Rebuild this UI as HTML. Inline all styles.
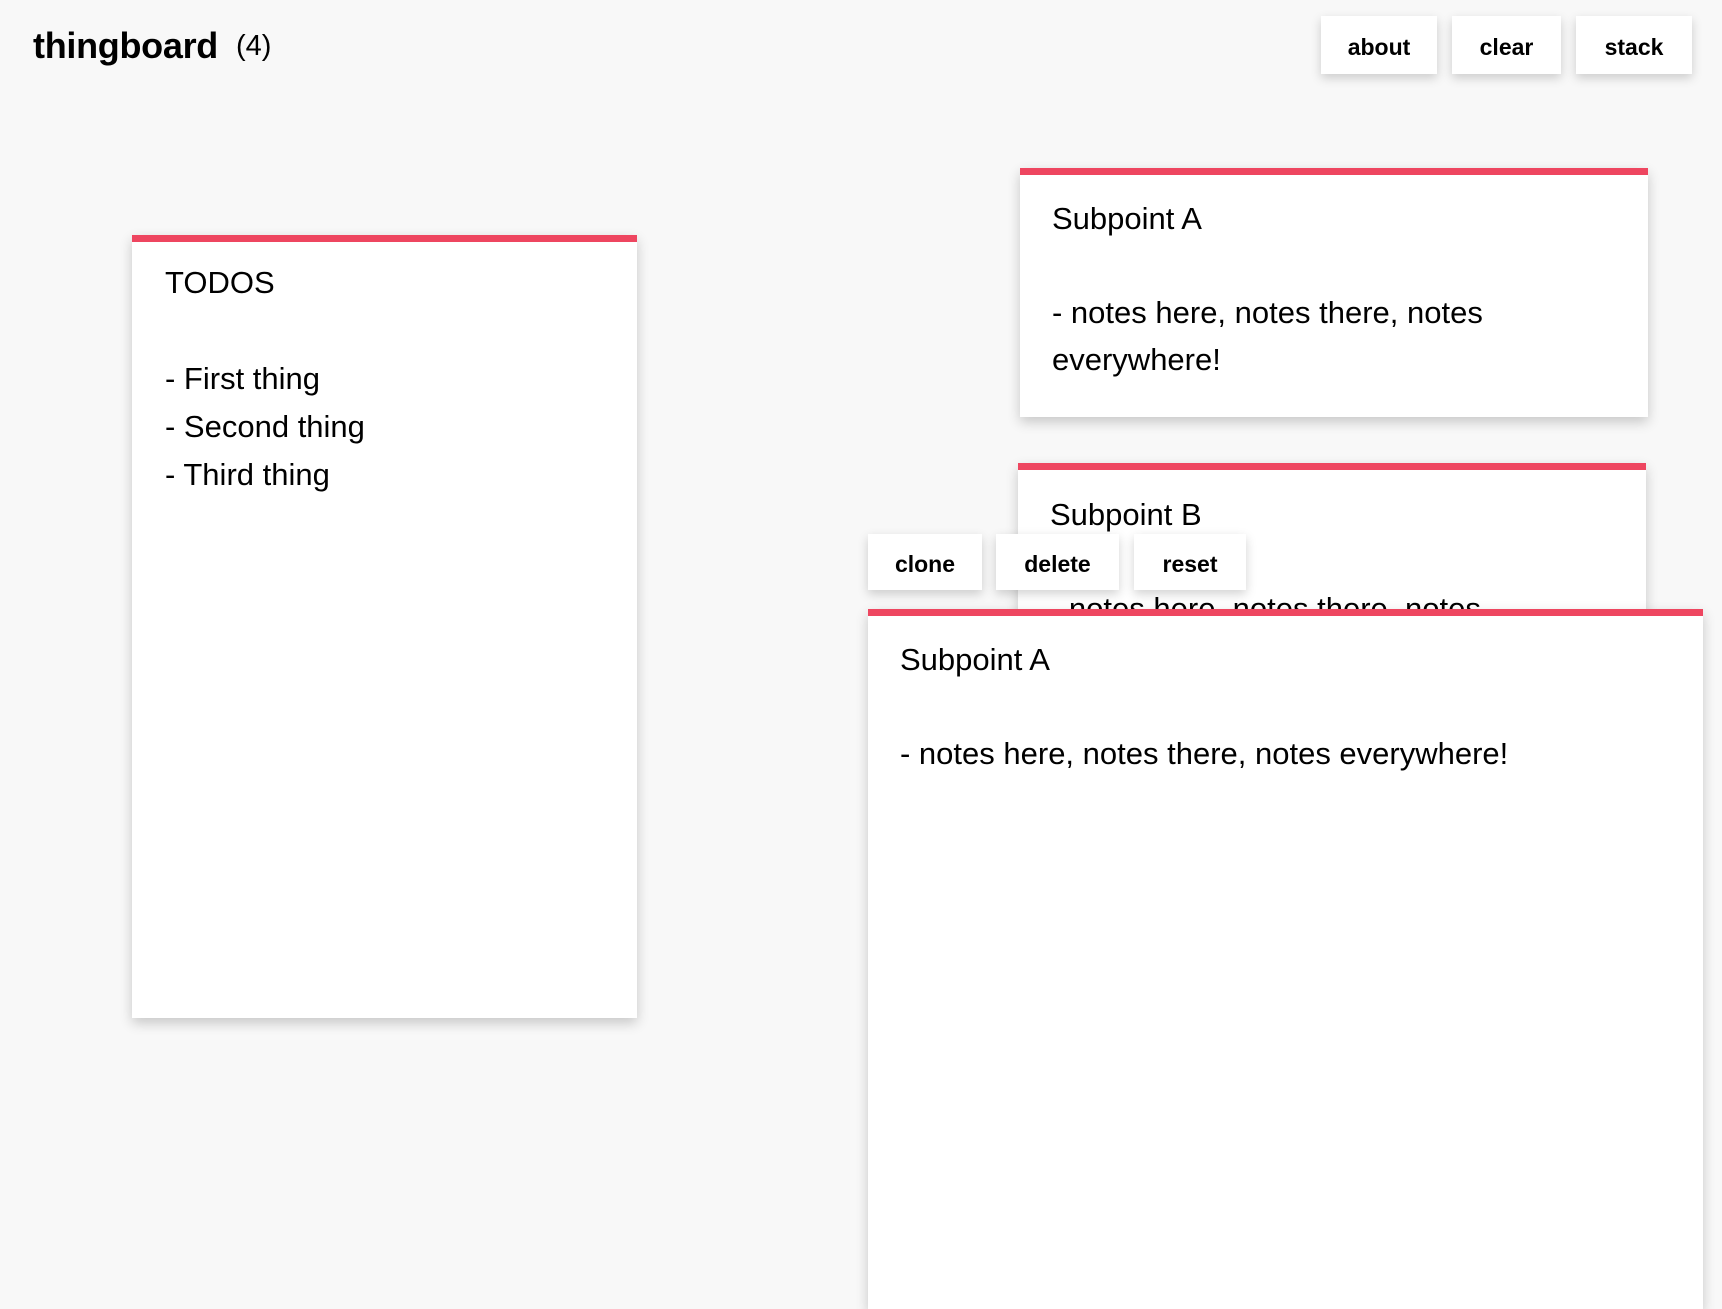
<!DOCTYPE html>
<html><head><meta charset="utf-8"><style>
body{margin:0;width:1722px;height:1292px;background:#f8f8f8;font-family:"Liberation Sans",sans-serif;color:#000;overflow:hidden;position:relative}
.t{position:absolute;left:33px;top:25px;font-size:36px;font-weight:bold;letter-spacing:-0.3px}
.c{position:absolute;left:236px;top:30px;font-size:29px}
.btn{position:absolute;background:#fff;box-shadow:0 4px 10px rgba(0,0,0,.18);font-weight:bold;font-size:23px;display:flex;align-items:center;justify-content:center;box-sizing:border-box;padding-top:4px}
.n{position:absolute;background:#fff;border-top:7px solid #ee4660;box-shadow:0 5px 12px rgba(0,0,0,.2);overflow:hidden;box-sizing:border-box}
.n div{position:absolute;white-space:nowrap;font-size:31px;line-height:48px}
</style></head><body>
<div class="t">thingboard</div><div class="c">(4)</div>
<div class="btn" style="left:1321px;top:16px;width:116px;height:58px">about</div>
<div class="btn" style="left:1452px;top:16px;width:109px;height:58px">clear</div>
<div class="btn" style="left:1576px;top:16px;width:116px;height:58px">stack</div>

<div class="n" style="left:132px;top:235px;width:505px;height:783px">
<div style="left:33px;top:17px">TODOS<br><br>- First thing<br>- Second thing<br>- Third thing</div></div>

<div class="n" style="left:1020px;top:168px;width:628px;height:249px">
<div style="left:32px;top:20px;line-height:47px">Subpoint A<br><br>- notes here, notes there, notes<br>everywhere!</div></div>

<div class="n" style="left:1018px;top:463px;width:628px;height:300px">
<div style="left:32px;top:21px;line-height:47px">Subpoint B<br><br>- notes here, notes there, notes</div></div>

<div class="n" style="left:868px;top:609px;width:835px;height:700px">
<div style="left:32px;top:20px;line-height:47px">Subpoint A<br><br>- notes here, notes there, notes everywhere!</div></div>

<div class="btn" style="left:868px;top:534px;width:114px;height:56px">clone</div>
<div class="btn" style="left:996px;top:534px;width:123px;height:56px">delete</div>
<div class="btn" style="left:1134px;top:534px;width:112px;height:56px">reset</div>
</body></html>
